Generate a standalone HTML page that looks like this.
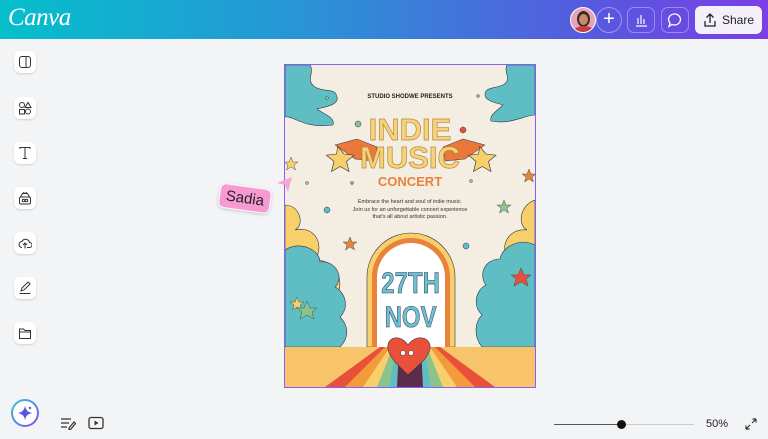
<!DOCTYPE html>
<html><head><meta charset="utf-8"><style>
*{margin:0;padding:0;box-sizing:border-box}
body{width:768px;height:439px;overflow:hidden;background:#f3f4f6;font-family:"Liberation Sans",sans-serif;position:relative}
.top{position:absolute;left:0;top:0;width:768px;height:39px;background:linear-gradient(90deg,#05bfcc 0%,#2a93d6 40%,#5a55e0 80%,#7b3fe6 100%)}
.logo{position:absolute;left:8px;top:4px;font-family:"Liberation Serif",serif;font-style:italic;color:#fff;font-size:25px;letter-spacing:-0.5px}
.tb{position:absolute;top:7px;height:26px;border:1px solid rgba(255,255,255,.35);border-radius:7px}
.side{position:absolute;left:14px;width:22px;height:22px;background:#fff;border-radius:6px;box-shadow:0 1px 2px rgba(0,0,0,.15)}
.side svg{position:absolute;left:4px;top:4px}
</style></head><body>
<div class="top">
<div class="logo">Canva</div>
<div style="position:absolute;left:570px;top:7px;width:26px;height:26px;border-radius:50%;background:#e9a3b8;border:1px solid #fff;overflow:hidden"><div style="position:absolute;left:6px;top:3px;width:13px;height:16px;border-radius:50%;background:#3a2a22"></div><div style="position:absolute;left:8px;top:6px;width:9px;height:11px;border-radius:50%;background:#c48a6a"></div><div style="position:absolute;left:3px;top:18px;width:20px;height:10px;border-radius:50%;background:#c64040"></div></div>
<div style="position:absolute;left:596px;top:7px;width:26px;height:26px;border-radius:50%;border:1px solid rgba(255,255,255,.4);color:#fff;font-size:20px;text-align:center;line-height:23px">+</div>
<div class="tb" style="left:627px;width:28px"><svg width="26" height="24"><path d="M8 18h11M10 16V10M13 16V7M16 16V11" stroke="#fff" stroke-width="1.2" fill="none"/></svg></div>
<div class="tb" style="left:661px;width:28px"><svg width="26" height="24"><path d="M13 6a6 5.5 0 1 1 -3 10.5l-3 2 1-3.5A6 5.5 0 0 1 13 6z" stroke="#fff" stroke-width="1.3" fill="none"/></svg></div>
<div style="position:absolute;left:695px;top:6px;width:67px;height:28px;background:#f4f0fb;border-radius:6px;font-size:12px;color:#222;line-height:28px;padding-left:27px">Share<svg style="position:absolute;left:8px;top:6px" width="14" height="16"><path d="M7 2v9M3.5 5.5L7 2l3.5 3.5M2 9v5h10V9" stroke="#222" stroke-width="1.3" fill="none"/></svg></div>
</div>

<div class="side" style="top:51px"><svg width="14" height="14"><rect x="1.5" y="1.5" width="11" height="11" rx="2.5" stroke="#333" fill="none"/><path d="M8 1.5v11" stroke="#333"/></svg></div>
<div class="side" style="top:97px"><svg width="14" height="14"><circle cx="4" cy="4" r="2.5" stroke="#333" fill="none"/><path d="M10 1.5l3 5h-6z" stroke="#333" fill="none"/><rect x="1.5" y="8.5" width="5" height="4.5" stroke="#333" fill="none"/><circle cx="10" cy="10.5" r="2.5" stroke="#333" fill="none"/></svg></div>
<div class="side" style="top:142px"><svg width="14" height="14"><path d="M2 3V1.5h10V3M7 1.5V12.5M5 12.5h4" stroke="#333" fill="none"/></svg></div>
<div class="side" style="top:187px"><svg width="14" height="14"><rect x="1.5" y="6" width="11" height="7" rx="1.5" stroke="#333" fill="none"/><path d="M2.5 6l2-3.5h5l2 3.5M5 1.5l2 1 2-1" stroke="#333" fill="none"/><circle cx="5.5" cy="9.5" r="1.3" stroke="#333" fill="none"/><circle cx="8.5" cy="9.5" r="1.3" stroke="#333" fill="none"/></svg></div>
<div class="side" style="top:232px"><svg width="14" height="14"><path d="M4 11.5a3 3 0 0 1 0-6 4 4 0 0 1 7.5 1 2.5 2.5 0 0 1 0 5H9M7 12.5V7M5 9l2-2 2 2" stroke="#333" fill="none"/></svg></div>
<div class="side" style="top:277px"><svg width="14" height="14"><path d="M1.5 12.5h11M3 10l1-3 6-6 2 2-6 6z" stroke="#333" fill="none"/></svg></div>
<div class="side" style="top:322px"><svg width="14" height="14"><path d="M1.5 3h4l1.5 1.5h5.5v8h-11zM1.5 6h11" stroke="#333" fill="none"/></svg></div>
<div style="position:absolute;left:11px;top:399px;width:28px;height:28px;border-radius:50%;background:linear-gradient(135deg,#2cc8d8,#8a4be8);padding:2px"><div style="width:24px;height:24px;border-radius:50%;background:#fff;position:relative"><svg style="position:absolute;left:4px;top:4px" width="16" height="16"><path d="M8 1Q9 7 15 8Q9 9 8 15Q7 9 1 8Q7 7 8 1z" fill="#5a55e0"/><circle cx="13" cy="3" r="1.2" fill="#5a55e0"/></svg></div></div>

<svg style="position:absolute;left:60px;top:416px" width="16" height="14"><path d="M1 3h10M1 7h8M1 11h6M9 12l5-6 1.5 1.5-5 6H9z" stroke="#333" stroke-width="1.2" fill="none"/></svg>
<svg style="position:absolute;left:88px;top:416px" width="16" height="14"><rect x="1" y="1.5" width="14" height="11" rx="2" stroke="#333" stroke-width="1.3" fill="none"/><path d="M6.5 4.5v5l4-2.5z" fill="#333"/></svg>

<div style="position:absolute;left:554px;top:424px;width:140px;height:1px;background:#ccc"></div>
<div style="position:absolute;left:554px;top:424px;width:68px;height:1px;background:#555"></div>
<div style="position:absolute;left:617px;top:420px;width:9px;height:9px;border-radius:50%;background:#111"></div>
<div style="position:absolute;left:706px;top:418px;font-size:11px;color:#222">50%</div>
<svg style="position:absolute;left:744px;top:417px" width="14" height="14"><path d="M2 12l4-4M2 12h3.5M2 12V8.5M12 2L8 6M12 2H8.5M12 2v3.5" stroke="#333" stroke-width="1.2" fill="none"/></svg>

<div style="position:absolute;left:284px;top:64px;width:252px;height:324px;border:1.5px solid #8b5cf6"></div>
<svg style="position:absolute;left:285px;top:65px" width="250" height="322" viewBox="0 0 250 322">
<rect width="250" height="322" fill="#f3ede2"/>
<path d="M0 0h25c5 8-5 15 5 22 10 6 20 0 22 10 2 8-12 10-20 12 8 6 18 8 16 16-30 4-40-10-48-8z" fill="#5ebec4" stroke="#334" stroke-width=".6"/>
<path d="M250 0h-28c-4 8 6 14-4 20-10 4-18 2-18 10 0 6 12 8 18 10-6 6-14 10-12 16 20 4 34-6 44-6z" fill="#5ebec4" stroke="#334" stroke-width=".6"/>
<text x="125" y="33" font-size="6" font-weight="bold" text-anchor="middle" fill="#222">STUDIO SHODWE PRESENTS</text>
<path d="M50 80l22-6 20 8-2 14-20-2zM200 80l-22-6-20 8 2 14 20-2z" fill="#e9783a" stroke="#334" stroke-width=".5"/>
<path d="M55 78l5 6 8 1-6 5 2 8-7-4-7 4 2-8-6-5 8-1z" fill="#f7cf6b" stroke="#334" stroke-width=".5" transform="translate(-16,-16) scale(1.25)"/>
<path d="M195 78l5 6 8 1-6 5 2 8-7-4-7 4 2-8-6-5 8-1z" fill="#f7cf6b" stroke="#334" stroke-width=".5" transform="translate(-49,-16) scale(1.25)"/>
<text x="125" y="75" font-size="31" font-weight="bold" text-anchor="middle" fill="#f7d27a" stroke="#b08a3a" stroke-width=".7" font-family="Liberation Sans">INDIE</text>
<text x="125" y="103" font-size="31" font-weight="bold" text-anchor="middle" fill="#f7d27a" stroke="#b08a3a" stroke-width=".7">MUSIC</text>
<text x="125" y="121" font-size="13" font-weight="bold" text-anchor="middle" fill="#e9823a">CONCERT</text>
<text x="125" y="138" font-size="5.5" text-anchor="middle" fill="#333">Embrace the heart and soul of indie music.</text>
<text x="125" y="146" font-size="5.5" text-anchor="middle" fill="#333">Join us for an unforgettable concert experience</text>
<text x="125" y="153" font-size="5.5" text-anchor="middle" fill="#333">that's all about artistic passion.</text>
<circle cx="73" cy="59" r="3" fill="#8bc48a" stroke="#334" stroke-width=".5"/><circle cx="178" cy="65" r="3" fill="#e9503a" stroke="#334" stroke-width=".5"/>
<circle cx="42" cy="145" r="3" fill="#5ebec4" stroke="#334" stroke-width=".5"/><circle cx="181" cy="181" r="3" fill="#5ebec4" stroke="#334" stroke-width=".5"/>
<circle cx="42" cy="33" r="1.5" fill="#8bc48a" stroke="#334" stroke-width=".4"/><circle cx="193" cy="31" r="1.5" fill="#8bc48a" stroke="#334" stroke-width=".4"/>
<circle cx="22" cy="118" r="1.5" fill="#8bc48a" stroke="#334" stroke-width=".4"/><circle cx="67" cy="118" r="1.5" fill="#e9823a" stroke="#334" stroke-width=".4"/><circle cx="186" cy="116" r="1.5" fill="#8bc48a" stroke="#334" stroke-width=".4"/>
<path d="M0 140c15 0 20 20 10 25 20-5 30 15 20 30 25 0 30 25 20 40l-50 0z" fill="#f7cf6b" stroke="#334" stroke-width=".6"/>
<path d="M250 135c-15 5-18 25-8 30-20-2-28 18-18 30-25 2-28 25-18 40l44 0z" fill="#f7cf6b" stroke="#334" stroke-width=".6"/>
<path d="M0 185c15-10 35 0 35 12 15-2 25 15 15 25 10 5 15 20 5 30 8 8 10 20 0 30h-55z" fill="#5ebec4" stroke="#334" stroke-width=".6"/>
<path d="M250 180c-15-8-33 2-35 14-15 0-22 15-14 26-10 5-14 20-4 30-8 8-8 22 0 32h53z" fill="#5ebec4" stroke="#334" stroke-width=".6"/>
<path d="M82 282V212a44 44 0 0 1 88 0V282z" fill="#f7cf6b" stroke="#334" stroke-width=".6"/>
<path d="M87 282V212a39 39 0 0 1 78 0V282z" fill="#e9823a"/>
<path d="M92 282V212a34 34 0 0 1 68 0V282z" fill="#fff"/>
<text x="126" y="228" font-size="30" font-weight="bold" text-anchor="middle" fill="#6cc3cc" stroke="#336" stroke-width=".6" transform="scale(0.8,1) translate(31,0)">27TH</text>
<text x="126" y="262" font-size="30" font-weight="bold" text-anchor="middle" fill="#6cc3cc" stroke="#336" stroke-width=".6" transform="scale(0.8,1) translate(31,0)">NOV</text>
<rect y="282" width="250" height="40" fill="#f7c46a"/>
<path d="M95 282L40 322h170l-55-40z" fill="#e9503a"/>
<path d="M100 282L60 322h130l-40-40z" fill="#f39a3a"/>
<path d="M105 282L78 322h94l-27-40z" fill="#f7cf6b"/>
<path d="M108 282L92 322h66l-16-40z" fill="#8bc48a"/>
<path d="M111 282L104 322h42l-7-40z" fill="#5ebec4"/>
<path d="M114 282L112 322h26l-2-40z" fill="#5b2d4a"/>
<path d="M123 280c-8-12-22-8-20 4 2 10 12 18 20 26 8-8 20-16 22-26 2-12-14-16-22-4z" fill="#e9503a" stroke="#334" stroke-width=".6"/>
<circle cx="118" cy="288" r="2.5" fill="#fff" stroke="#333" stroke-width=".5"/><circle cx="126" cy="288" r="2.5" fill="#fff" stroke="#333" stroke-width=".5"/>
<path d="M6 232l2 5h5l-4 3 1.5 5-4.5-3-4.5 3 1.5-5-4-3h5z" fill="#f7cf6b" stroke="#334" stroke-width=".4" transform="translate(6,0)"/>
<path d="M22 236l3 7h7l-5 4 2 7-7-4-7 4 2-7-5-4h7z" fill="#8bc48a" stroke="#334" stroke-width=".4"/>
<path d="M236 203l3 7h7l-5 4 2 7-7-4-7 4 2-7-5-4h7z" fill="#e9503a" stroke="#334" stroke-width=".4"/>
<path d="M65 172l2 5h5l-4 3 1.5 5-4.5-3-4.5 3 1.5-5-4-3h5z" fill="#e9823a" stroke="#334" stroke-width=".4"/>
<path d="M219 135l2 5h5l-4 3 1.5 5-4.5-3-4.5 3 1.5-5-4-3h5z" fill="#8bc48a" stroke="#334" stroke-width=".4"/>
<path d="M244 104l2 5h5l-4 3 1.5 5-4.5-3-4.5 3 1.5-5-4-3h5z" fill="#e9823a" stroke="#334" stroke-width=".4"/>
<path d="M6 92l2 5h5l-4 3 1.5 5-4.5-3-4.5 3 1.5-5-4-3h5z" fill="#f7cf6b" stroke="#334" stroke-width=".4"/>
</svg>

<svg style="position:absolute;left:274px;top:174px" width="20" height="20"><path d="M18 3L3 9l8 2 3 7z" fill="#f5a6d8"/></svg>
<div style="position:absolute;left:219px;top:186px;width:52px;height:25px;background:#f79ad4;border:1px solid #fff;border-radius:6px;transform:rotate(8deg);font-size:15px;color:#222;text-align:center;line-height:23px;box-shadow:0 1px 3px rgba(0,0,0,.2)">Sadia</div>
</body></html>
